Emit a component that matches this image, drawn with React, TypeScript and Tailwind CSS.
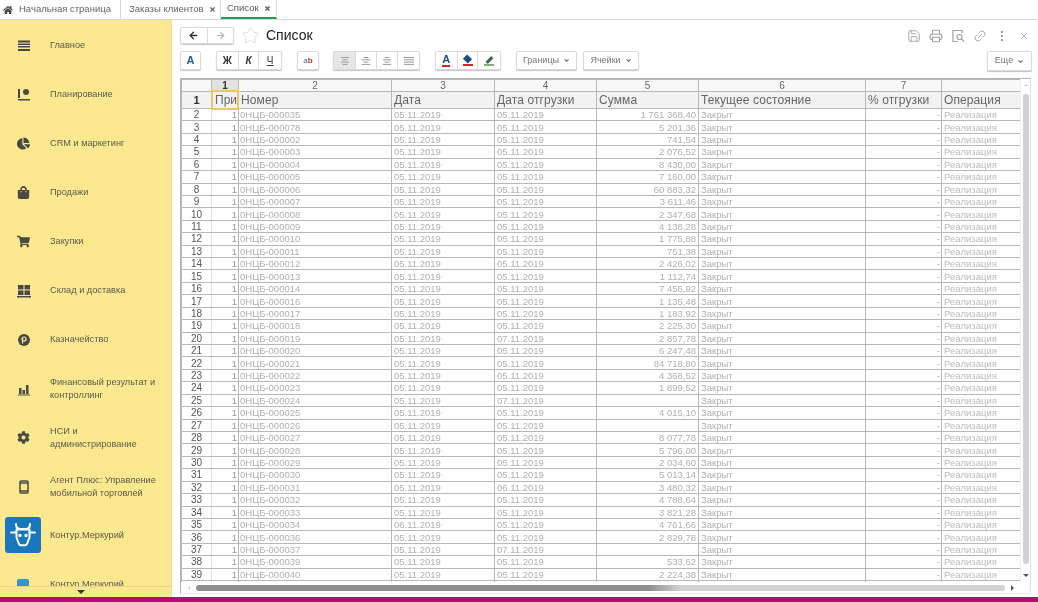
import React from "react";
import { Star, ArrowLeft, ArrowRight, Printer, Save, Link2, MoreVertical, X, ChevronDown } from "lucide-react";
import { FaChartPie, FaShoppingBag, FaShoppingCart, FaCog, FaHome } from "react-icons/fa";

const data: [string, string, string, string][] = [
  ["000035","05","05","1 761 368,40"],["000078","05","05","5 201,36"],["000002","05","05","741,54"],["000003","05","05","2 076,52"],
  ["000004","05","05","8 430,00"],["000005","05","05","7 160,00"],["000006","05","05","60 883,32"],["000007","05","05","3 611,46"],
  ["000008","05","05","2 347,68"],["000009","05","05","4 138,28"],["000010","05","05","1 775,88"],["000011","05","05","751,38"],
  ["000012","05","05","2 426,02"],["000013","05","05","1 112,74"],["000014","05","05","7 456,92"],["000016","05","05","1 135,48"],
  ["000017","05","05","1 183,92"],["000018","05","05","2 225,30"],["000019","05","07","2 857,78"],["000020","05","05","6 247,48"],
  ["000021","05","05","84 718,80"],["000022","05","05","4 368,52"],["000023","05","05","1 899,52"],["000024","05","07",""],
  ["000025","05","05","4 015,10"],["000026","05","05",""],["000027","05","05","8 077,78"],["000028","05","05","5 796,00"],
  ["000029","05","05","2 034,60"],["000030","05","05","5 013,14"],["000031","05","06","3 480,32"],["000032","05","05","4 788,64"],
  ["000033","05","05","3 821,28"],["000034","06","05","4 761,66"],["000036","05","05","2 829,78"],["000037","05","07",""],
  ["000039","05","05","533,62"],["000040","05","05","2 224,38"],["000041","05","05","1 204,50"],
];

const cols = [30, 27, 153, 103, 102, 102, 167, 76, 80];
const heads = ["Номер", "Дата", "Дата отгрузки", "Сумма", "Текущее состояние", "% отгрузки", "Операция"];

function CowIcon() {
  return (
    <svg width="28" height="26" viewBox="0 0 28 26" fill="none" stroke="#fff" strokeWidth="2" strokeLinejoin="round" strokeLinecap="round">
      <path d="M7 2c0 3.500 2 5 4.500 5h5c2.500 0 4.500-1.500 4.500-5" />
      <path d="M2 10.500h5.500M20.500 10.500H26" />
      <path d="M7.500 7.500v8l2.500 6.500c.3.800 1 1.200 1.800 1.200h4.400c.8 0 1.500-.4 1.800-1.200l2.500-6.500v-8z" />
      <circle cx="11" cy="13.500" r=".7" fill="#fff" />
      <circle cx="17" cy="13.500" r=".7" fill="#fff" />
    </svg>
  );
}

const ic = "w-[13px] h-[13px] text-[#4a4a42]";
const side: { icon: React.ReactNode; label: React.ReactNode }[] = [
  { icon: <svg width="12" height="12" viewBox="0 0 12 12" fill="#4a4a42"><rect y="0.500" width="12" height="2" /><rect y="3.500" width="12" height="1.500" /><rect y="6" width="12" height="1.500" /><rect y="9" width="12" height="2" /></svg>, label: "Главное" },
  { icon: <svg width="14" height="14" viewBox="0 0 14 14" fill="#4a4a42"><circle cx="9" cy="4" r="3" /><rect x="1" y="1" width="2" height="9" /><rect x="1" y="11" width="12" height="1.500" /></svg>, label: "Планирование" },
  { icon: <FaChartPie className={ic} />, label: "CRM и маркетинг" },
  { icon: <FaShoppingBag className={ic} />, label: "Продажи" },
  { icon: <FaShoppingCart className={ic} />, label: "Закупки" },
  { icon: <svg width="14" height="14" viewBox="0 0 14 14" fill="#4a4a42"><rect x="1" y="1" width="5.500" height="4.500" /><rect x="7.500" y="1" width="5.500" height="4.500" /><rect x="1" y="6.500" width="5.500" height="4.500" /><rect x="7.500" y="6.500" width="5.500" height="4.500" /><rect x="0" y="12" width="14" height="1.500" /></svg>, label: "Склад и доставка" },
  { icon: <svg width="14" height="14" viewBox="0 0 14 14"><circle cx="7" cy="7" r="6" fill="#4a4a42" /><circle cx="7" cy="6" r="2" fill="none" stroke="#fce98f" strokeWidth="1.200" /><rect x="5" y="5" width="1.200" height="5.500" fill="#fce98f" /></svg>, label: "Казначейство" },
  { icon: <svg width="14" height="14" viewBox="0 0 14 14" fill="#4a4a42"><rect x="2" y="6" width="2.500" height="6" /><rect x="5.500" y="8" width="2.500" height="4" /><rect x="9" y="3" width="2.500" height="9" /><rect x="1" y="12.500" width="12" height="1" /></svg>, label: <>Финансовый результат и<br />контроллинг</> },
  { icon: <FaCog className={ic} />, label: <>НСИ и<br />администрирование</> },
  { icon: <svg width="14" height="14" viewBox="0 0 14 14" fill="none" stroke="#4a4a42" strokeWidth="1.500"><rect x="3" y="1" width="8" height="12" rx="1" /><line x1="3" x2="11" y1="3" y2="3" /><line x1="3" x2="11" y1="11" y2="11" /></svg>, label: <>Агент Плюс: Управление<br />мобильной торговлей</> },
];

function Btn({ children, w, active }: { children: React.ReactNode; w: string; active?: boolean }) {
  return <div className={`${w} h-full flex items-center justify-center border-r border-[#dcdcdc] last:border-r-0 ${active ? "bg-[#e6e6e6]" : ""}`}>{children}</div>;
}

const group = "h-[19px] flex border border-[#dadada] rounded-[2px] bg-white shadow-[0_1px_1px_#c4c4c4]";

function Align({ lines }: { lines: number[] }) {
  return (
    <svg width="10" height="10" viewBox="0 0 10 10" stroke="#9a9a9a" strokeWidth="1">
      {lines.map((w, i) => <line key={i} x1={(10 - w) / 2} x2={(10 + w) / 2} y1={1.500 + i * 2.300} y2={1.500 + i * 2.300} />)}
    </svg>
  );
}

const cell = "border border-[#b8b8b8] p-0";

export default function App() {
  return (
    <div className="w-[1038px] h-[602px] overflow-hidden flex flex-col bg-white text-[#4a4a42] blur-[0.6px]" style={{ fontFamily: '"Liberation Sans", Arial, sans-serif' }}>
      {/* tabs */}
      <div className="h-[20px] shrink-0 flex border-b border-[#d8d8d8] text-[9.500px] text-[#666]">
        <div className="w-[121px] flex items-center pl-[3px] gap-[6px] border-r border-[#d8d8d8]">
          <FaHome className="w-[10px] h-[10px] text-[#444]" /><span>Начальная страница</span>
        </div>
        <div className="w-[100px] flex items-center pl-[8px] gap-[5px] border-r border-[#d8d8d8]">
          <span>Заказы клиентов</span><X className="w-[7px] h-[7px]" strokeWidth={4} />
        </div>
        <div className="w-[56px] flex items-center pl-[6px] gap-[5px] border-r border-[#d8d8d8] border-b-2 border-b-[#1f9d55] text-[#555]">
          <span>Список</span><X className="w-[7px] h-[7px]" strokeWidth={4} />
        </div>
      </div>

      <div className="flex-1 flex min-h-0">
        {/* sidebar */}
        <div className="w-[172px] shrink-0 bg-[#fce98f] border-r border-[#e8e0b0] relative overflow-hidden pt-[1px] text-[9.200px] leading-[13px] text-[#5a5a4c]">
          {side.map((s, i) => (
            <div key={i} className="h-[49px] flex items-center">
              <div className="w-[46px] flex justify-center pl-[1px]">{s.icon}</div>
              <div className="pl-[4px] whitespace-nowrap">{s.label}</div>
            </div>
          ))}
          <div className="h-[49px] flex items-center">
            <div className="w-[36px] h-[36px] ml-[5px] mb-[2px] bg-[#1a76bd] rounded-[3px] flex items-center justify-center"><CowIcon /></div>
            <div className="pl-[9px]">Контур.Меркурий</div>
          </div>
          <div className="h-[49px] flex items-center">
            <div className="w-[12px] h-[12px] ml-[17px] bg-[#3d8fd1] rounded-[2px]" />
            <div className="pl-[21px]">Контур.Меркурий</div>
          </div>
          <div className="absolute left-0 right-0 bottom-0 h-[11px] bg-[#fce98f] border-t border-[#e6d684] flex justify-center pt-[3px]">
            <div className="w-0 h-0 border-x-[4px] border-x-transparent border-t-[4px] border-t-[#333] ml-[-10px]" />
          </div>
        </div>

        {/* main */}
        <div className="flex-1 min-w-0 flex flex-col pl-[8px] pr-[6px] pt-[7px]">
          <div className="h-[17px] flex items-center shrink-0">
            <div className="h-[17px] w-[54px] flex border border-[#dadada] rounded-[2px] shadow-[0_1px_1px_#c4c4c4]">
              <Btn w="w-[27px]"><ArrowLeft className="w-[11px] h-[11px] text-[#333]" strokeWidth={3} /></Btn>
              <Btn w="w-[26px]"><ArrowRight className="w-[11px] h-[11px] text-[#b4b4b4]" strokeWidth={2.500} /></Btn>
            </div>
            <Star className="w-[19px] h-[19px] ml-[7px] text-[#dcdcdc]" strokeWidth={1.200} />
            <div className="ml-[6px] text-[14px] font-normal text-[#222]">Список</div>
            <div className="ml-auto flex items-center gap-[8px] pr-[1px] text-[#a0a0a0]">
              <Save className="w-[14px] h-[14px]" strokeWidth={1.500} />
              <Printer className="w-[14px] h-[14px]" strokeWidth={1.800} />
              <svg width="14" height="14" viewBox="0 0 14 14" fill="none" stroke="currentColor" strokeWidth="1.200"><path d="M11 4V1.500H2v11h5" /><circle cx="8.500" cy="8" r="2.500" /><path d="M10.500 10l2.500 2.500" /></svg>
              <Link2 className="w-[14px] h-[14px] -rotate-45" strokeWidth={1.500} />
              <MoreVertical className="w-[14px] h-[14px]" strokeWidth={2} />
              <X className="w-[14px] h-[14px] p-[2px]" strokeWidth={2} />
            </div>
          </div>

          <div className="h-[20px] mt-[7px] flex items-start shrink-0 text-[9px] text-[#777]">
            <div className={`${group} w-[21px] items-center justify-center font-bold text-[11px] text-[#1e5f96]`}>A</div>
            <div className={`${group} ml-[15px] w-[66px] font-bold text-[#333] text-[10px]`}>
              <Btn w="w-[22px]">Ж</Btn><Btn w="w-[21px]"><i>К</i></Btn><Btn w="w-[22px]"><u className="font-normal">Ч</u></Btn>
            </div>
            <div className={`${group} ml-[15px] w-[22px] items-center justify-center text-[8px]`}>
              <span className="text-[#46a]">a</span><span className="text-[#c33] font-bold">b</span>
            </div>
            <div className={`${group} ml-[14px] w-[87px]`}>
              <Btn w="w-[22px]" active><Align lines={[8, 5, 8, 5]} /></Btn>
              <Btn w="w-[21px]"><Align lines={[5, 9, 5, 9]} /></Btn>
              <Btn w="w-[21px]"><Align lines={[5, 8, 5, 8]} /></Btn>
              <Btn w="w-[21px]"><Align lines={[10, 10, 10, 10]} /></Btn>
            </div>
            <div className={`${group} ml-[15px] w-[66px] font-bold`}>
              <Btn w="w-[22px]"><span className="text-[#1e4f86] text-[11px] border-b-2 border-[#d22] leading-[11px]">A</span></Btn>
              <Btn w="w-[21px]"><span className="w-[10px] h-[10px] border-b-2 border-[#d22] flex justify-center"><span className="w-[7px] h-[6px] bg-[#1e4f86] rotate-45" /></span></Btn>
              <Btn w="w-[22px]"><span className="w-[10px] h-[10px] border-b-2 border-[#8a7]  flex justify-center"><span className="w-[3px] h-[8px] bg-[#3a6a50] rotate-45" /></span></Btn>
            </div>
            <div className={`${group} ml-[15px] w-[61px] items-center justify-center gap-[4px]`}>
              Границы <ChevronDown className="w-[7px] h-[7px]" strokeWidth={4} />
            </div>
            <div className={`${group} ml-[6px] w-[56px] items-center justify-center gap-[4px]`}>
              Ячейки <ChevronDown className="w-[7px] h-[7px]" strokeWidth={4} />
            </div>
            <div className={`${group} ml-auto w-[45px] h-[20px] items-center justify-center gap-[4px]`}>
              Еще <ChevronDown className="w-[7px] h-[7px]" strokeWidth={4} />
            </div>
          </div>

          {/* sheet */}
          <div className="mt-[7px] w-[851px] h-[516px] border border-[#b4b4b4] border-r-[#e0e0e0] border-b-[#e8e8e8] flex flex-col">
            <div className="flex-1 min-h-0 flex">
              <div className="flex-1 min-w-0 overflow-hidden">
                <table className="table-fixed border-collapse w-[840px] text-[#b0b0b0]">
                  <colgroup>{cols.map((w, i) => <col key={i} style={{ width: w }} />)}</colgroup>
                  <thead>
                    <tr className="h-[12px] text-[10px] leading-[10px] text-[#666] bg-[#f8f8f8]">
                      <th className={`${cell} font-normal`} />
                      {["1", "2", "3", "4", "5", "6", "7", ""].map((n, i) => (
                        <th key={i} className={`${cell} ${i === 0 ? "font-bold bg-[#e2e2e2] text-[#333]" : "font-normal"}`}>{n}</th>
                      ))}
                    </tr>
                    <tr className="h-[17px] text-[12px] leading-[14px] text-[#666] bg-[#f2f2f2]">
                      <th className={`${cell} font-bold text-[#333] text-[11px]`}>1</th>
                      <th className={`${cell} relative pl-[3px] font-normal text-left overflow-visible whitespace-nowrap`}>
                        При
                        <div className="absolute -left-[1px] -top-[2px] w-[28px] h-[20px] border-2 border-[#f0c860]" />
                      </th>
                      {heads.map((h) => (
                        <th key={h} className={`${cell} pl-[2px] font-normal text-left whitespace-nowrap overflow-hidden tracking-[0.1px]`}>{h}</th>
                      ))}
                    </tr>
                  </thead>
                  <tbody className="text-[9.500px] leading-[11px]">
                    {data.map((r, i) => (
                      <tr key={i} className="h-[12.43px]">
                        <td className={`${cell} border-r-[#e0e0e0] text-center text-[10px] text-[#555]`}>{i + 2}</td>
                        <td className={`${cell} border-l-[#e0e0e0] pr-[1px] text-right text-[#999]`}>1</td>
                        <td className={`${cell} pl-[1px]`}>0НЦБ-{r[0]}</td>
                        <td className={`${cell} pl-[2px]`}>{r[1]}.11.2019</td>
                        <td className={`${cell} pl-[2px]`}>{r[2]}.11.2019</td>
                        <td className={`${cell} pr-[2px] text-right`}>{r[3]}</td>
                        <td className={`${cell} pl-[2px]`}>Закрыт</td>
                        <td className={`${cell} pr-[1px] text-right`}>-</td>
                        <td className={`${cell} pl-[2px] text-[#bcbcbc]`}>Реализация</td>
                      </tr>
                    ))}
                  </tbody>
                </table>
              </div>
              {/* vertical scroll */}
              <div className="w-[10px] shrink-0 flex flex-col items-center pt-[5px] pb-[5px] border-l border-[#eeeeee]">
                <div className="w-0 h-0 border-x-[2px] border-x-transparent border-b-[2px] border-b-[#ccc]" />
                <div className="w-[6px] h-[470px] mt-[8px] bg-[#d2d2d2] rounded-[3px]" />
                <div className="mt-auto w-0 h-0 border-x-[3px] border-x-transparent border-t-[3px] border-t-[#555]" />
              </div>
            </div>
            <div className="h-[11px] shrink-0 flex items-center pl-[7px] pr-[16px]">
              <div className="w-0 h-0 border-y-[2px] border-y-transparent border-r-[2px] border-r-[#ccc]" />
              <div className="ml-[6px] flex-1 h-[6px] rounded-[3px] bg-[linear-gradient(to_right,#8e8e8e_0%,#8e8e8e_56%,#d2d2d2_60%,#d2d2d2_100%)]" />
              <div className="ml-[6px] w-0 h-0 border-y-[3px] border-y-transparent border-l-[3px] border-l-[#555]" />
            </div>
          </div>
        </div>
      </div>

      <div className="h-[5px] shrink-0 bg-[#b80b6f]" />
    </div>
  );
}
